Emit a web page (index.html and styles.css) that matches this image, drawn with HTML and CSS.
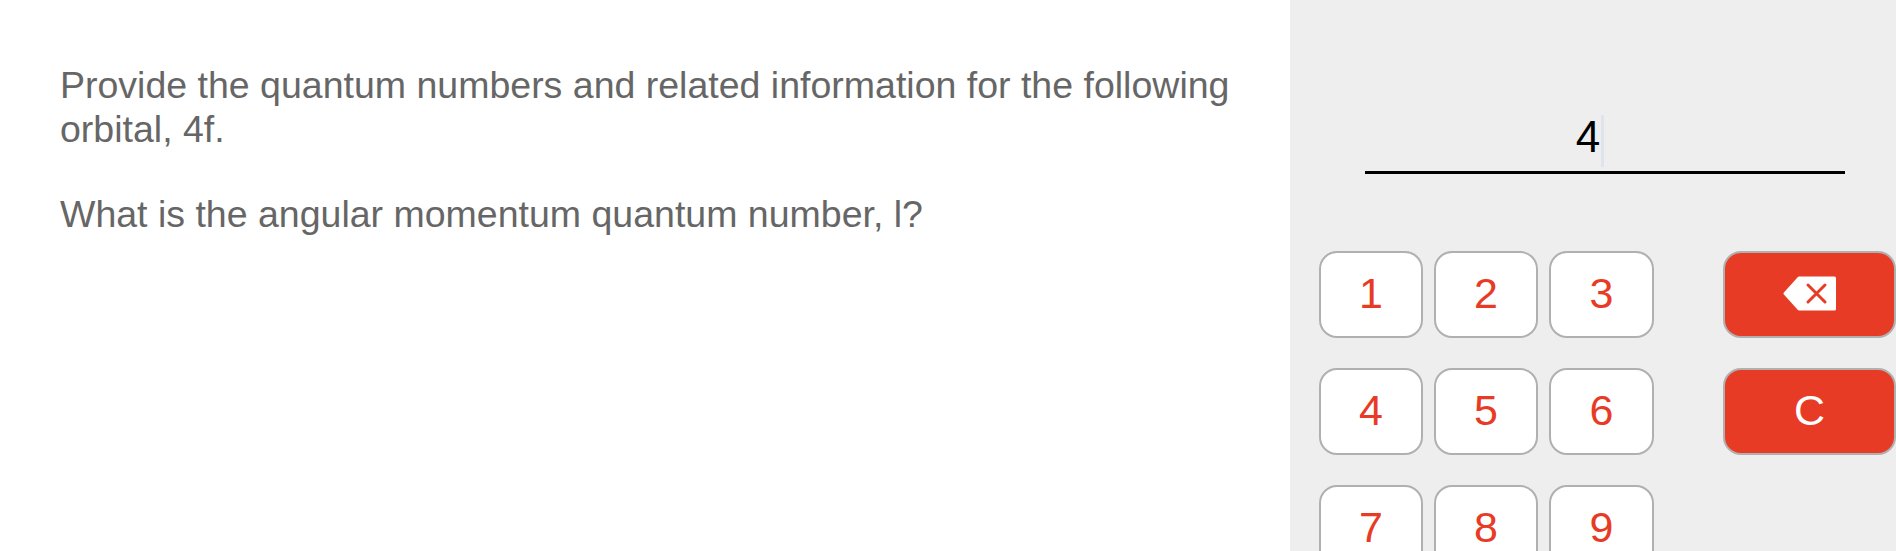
FILE: index.html
```html
<!DOCTYPE html>
<html>
<head>
    <title>Quantum numbers</title>
    <link rel="stylesheet" href="styles.css">
</head>
<body>
    <div class="page">
        <div class="question">
            <p>Provide the quantum numbers and related information for the following orbital, 4f.</p>
            <p>What is the angular momentum quantum number, l?</p>
        </div>
        <div class="panel">
            <div class="answer">
                <span class="answer-value">4</span>
                <span class="caret"></span>
            </div>
            <div class="keypad">
                <div class="digits">
                    <button type="button" class="key">1</button>
                    <button type="button" class="key">2</button>
                    <button type="button" class="key">3</button>
                    <button type="button" class="key">4</button>
                    <button type="button" class="key">5</button>
                    <button type="button" class="key">6</button>
                    <button type="button" class="key">7</button>
                    <button type="button" class="key">8</button>
                    <button type="button" class="key">9</button>
                </div>
                <div class="actions">
                    <button type="button" class="key key-red" aria-label="Backspace">
                        <svg class="backspace" width="53" height="35" viewBox="0 0 53 35">
                            <path d="M51.500 2H16L2 17.500 16 33H51.500Z" fill="#fff" stroke="#fff" stroke-width="3" stroke-linejoin="round"/>
                            <path d="M25 9L42 26M42 9L25 26" stroke="#e73b25" stroke-width="3" stroke-linecap="round"/>
                        </svg>
                    </button>
                    <button type="button" class="key key-red">C</button>
                </div>
            </div>
        </div>
    </div>
</body>
</html>
```

FILE: styles.css
```css
html, body {
    margin: 0;
    height: 100%;
    overflow: hidden;
    background: #fff;
    font-family: "Liberation Sans", Arial, sans-serif;
}
.page {
    display: flex;
    height: 551px;
}
.question {
    width: 1290px;
    box-sizing: border-box;
    padding: 64px 50px 0 60px;
    color: #666;
    font-size: 37.5px;
    line-height: 43.5px;
}
.question p {
    margin: 0 0 41.5px;
}
.panel {
    flex: 1;
    background: #eee;
    overflow: hidden;
}
.answer {
    display: flex;
    justify-content: center;
    align-items: center;
    box-sizing: border-box;
    height: 64px;
    margin: 110px 51px 0 75px;
    padding-right: 30px;
    border-bottom: 3px solid #000;
    font-size: 44px;
    color: #000;
}
.answer-value {
    margin-bottom: 7px;
}
.caret {
    width: 3px;
    height: 52px;
    margin-left: 1px;
    background: #dfe3ea;
}
.keypad {
    display: flex;
    gap: 69px;
    margin: 77px 0 0 29px;
}
.digits {
    display: grid;
    grid-template-columns: 104px 104px 105px;
    grid-auto-rows: 87px;
    gap: 30px 11px;
}
.actions {
    display: grid;
    grid-auto-rows: 87px;
    row-gap: 30px;
    width: 173px;
}
.key {
    display: flex;
    align-items: center;
    justify-content: center;
    padding: 0 0 2px;
    background: #fff;
    border: 2px solid #b0b0b0;
    border-radius: 18px;
    color: #e73b25;
    font-family: inherit;
    font-size: 43px;
}
.key-red {
    background: #e73b25;
    color: #fff;
}
```
